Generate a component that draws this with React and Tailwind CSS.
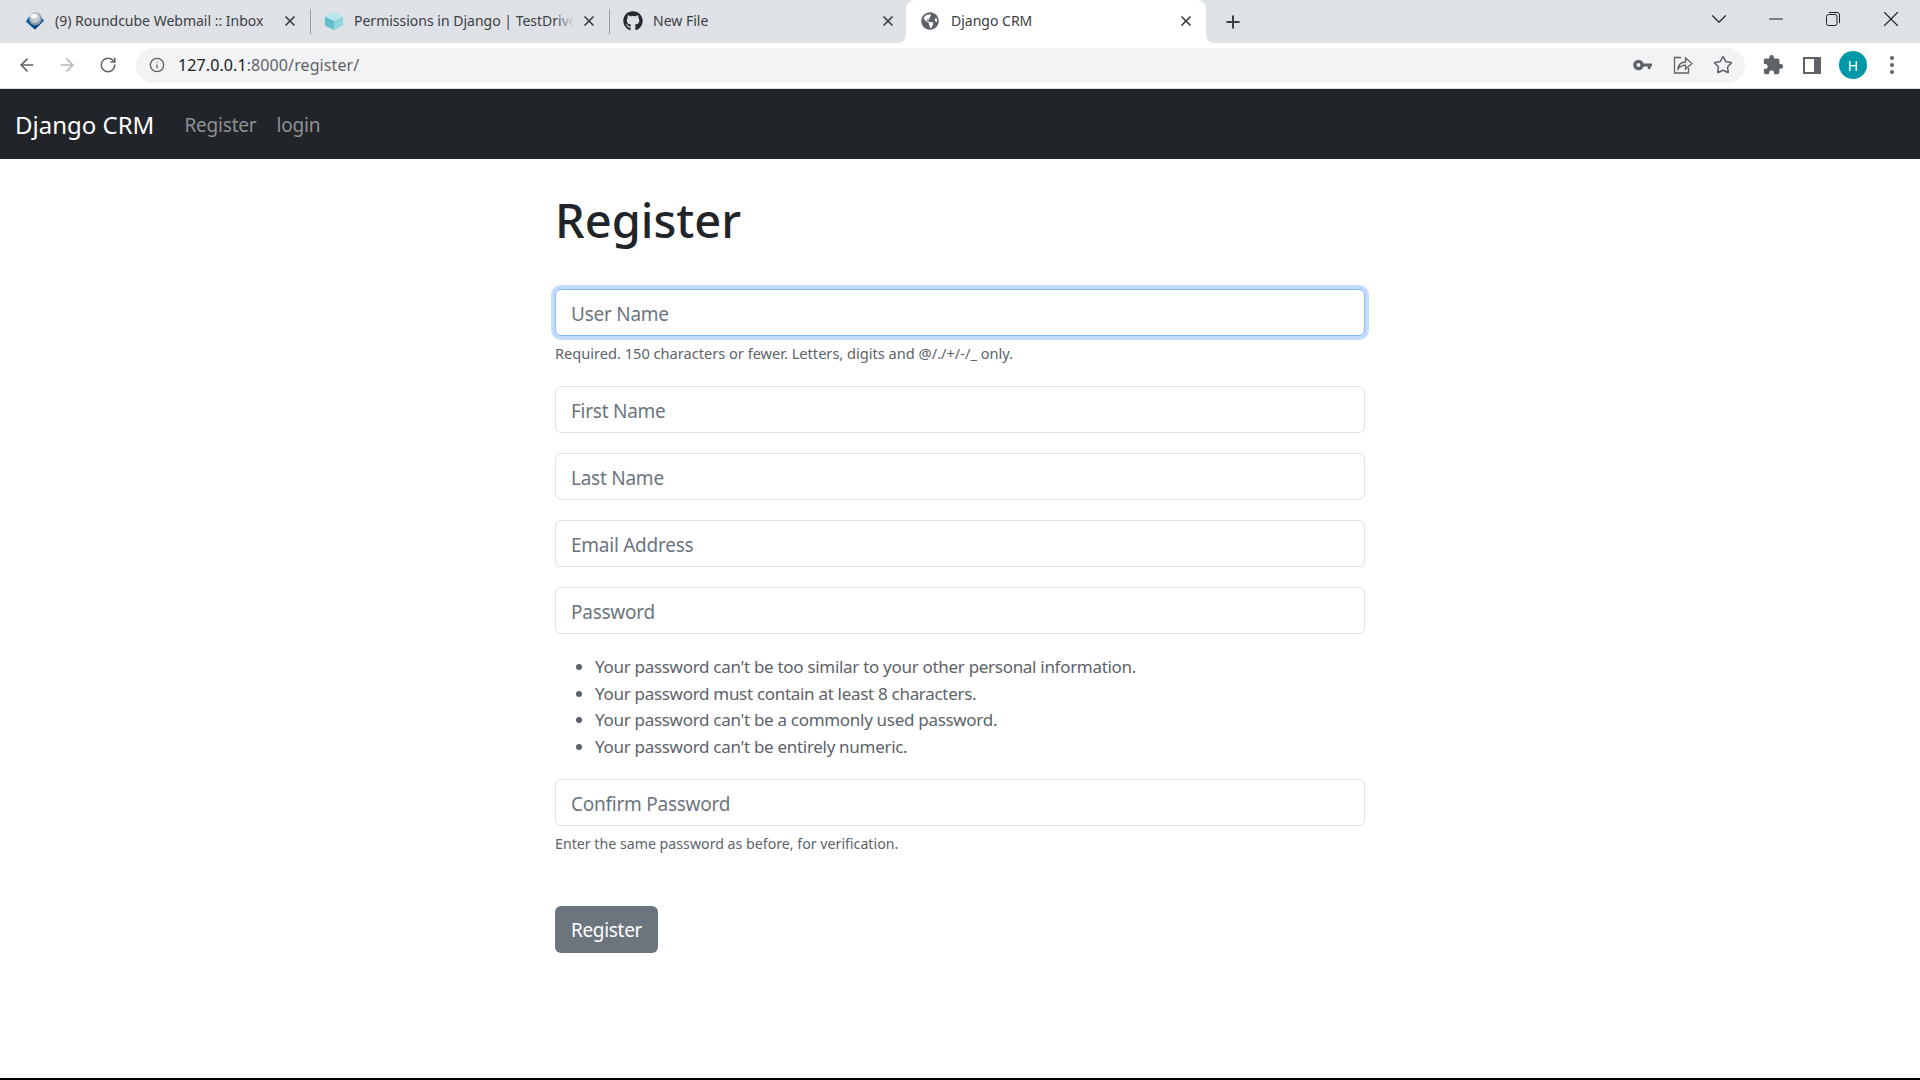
import { X, Plus, ArrowLeft, ArrowRight, RotateCw, Info, Star, ChevronDown, Minus } from "lucide-react";
import { FaGithub, FaGlobeAmericas } from "react-icons/fa";
import { MdExtension } from "react-icons/md";

const uiFont = "font-['Noto_Sans',sans-serif]";

const RoundcubeIcon = () => (
  <svg width="22" height="20" viewBox="0 0 22 20">
    <path d="M1 10.5 L11 19.5 L21 9.5 L17.5 6 L4 6 Z" fill="#0f5fa8" />
    <path d="M3 12 L11 16.5 L19.5 10.5 L11 19 Z" fill="#0a3f78" />
    <circle cx="11.5" cy="7.5" r="7" fill="#8f9aa6" />
    <circle cx="11" cy="6.5" r="5.6" fill="#c3c9cf" />
    <ellipse cx="10" cy="4.6" rx="3.8" ry="2.6" fill="#f4f5f6" />
  </svg>
);

const CubeIcon = () => (
  <svg width="22" height="22" viewBox="0 0 22 22">
    <path d="M11 1 L21 6 L11 11 L1 6 Z" fill="#b5e6ec" />
    <path d="M1 6 L11 11 L11 21 L1 16 Z" fill="#62c0cc" />
    <path d="M21 6 L11 11 L11 21 L21 16 Z" fill="#8fd5de" />
  </svg>
);

const KeyIcon = () => (
  <svg width="20" height="12" viewBox="0 0 20 12">
    <circle cx="5.5" cy="6" r="3.6" fill="none" stroke="#5f6368" strokeWidth="3.4" />
    <path d="M9 4.5 H19 V7.5 H17.5 V10 H14.8 V7.5 H9 Z" fill="#5f6368" />
  </svg>
);

const ShareIcon = () => (
  <svg width="20" height="20" viewBox="0 0 20 20" fill="none" stroke="#5f6368" strokeWidth="1.3">
    <path d="M8 2.5 H1.5 V18 H15.5 V13" />
    <path d="M5 14 C5.5 9.5 8.5 7 12.5 7 V3 L19 8.5 L12.5 14 V10.2 C9.5 10.2 7 11.5 5 14 Z" />
  </svg>
);

const SidePanelIcon = () => (
  <div className="flex h-[17px] w-[18px] bg-[#5f6368] p-[2px]">
    <div className="h-full w-[9px] bg-white" />
  </div>
);

const RestoreIcon = () => (
  <svg width="14" height="14" viewBox="0 0 14 14" fill="none" stroke="#202124" strokeWidth="1">
    <rect x="0.5" y="2.5" width="10.5" height="11" rx="2" />
    <path d="M3 0.5 H11 Q13.5 0.5 13.5 3 V11" />
  </svg>
);

const Tab = ({ width, icon, title, textWidth, fade }) => (
  <div className={`flex h-full shrink-0 items-center pb-[1px] pl-[13px] ${width}`}>
    <div className="flex w-[20px] shrink-0 justify-center">{icon}</div>
    <span className={`-mt-[2px] ml-[10px] overflow-hidden whitespace-nowrap text-[14px] text-[#3c4043] ${textWidth}`}>
      {title}
    </span>
    {fade && <span className="-ml-[18px] h-[20px] w-[18px] shrink-0 bg-gradient-to-r from-transparent to-[#dee1e6]" />}
    <X size={16} strokeWidth={2.6} className="ml-auto shrink-0 text-[#3c4043]" />
    <span className="ml-[12px] h-[25px] w-px shrink-0 bg-[#9aa0a6]" />
  </div>
);

const TabStrip = () => (
  <div className="flex h-[43px] shrink-0 items-stretch bg-[#dee1e6] pl-[12px]">
    <Tab width="w-[299px]" textWidth="w-[212px]" icon={<RoundcubeIcon />} title="(9) Roundcube Webmail :: Inbox" />
    <Tab width="w-[299px]" textWidth="w-[220px]" icon={<CubeIcon />} title="Permissions in Django | TestDriven.io" fade />
    <div className="flex h-full w-[296px] shrink-0 items-center pb-[1px] pl-[13px] pr-[10px]">
      <FaGithub size={20} className="shrink-0 text-[#24292f]" />
      <span className="-mt-[2px] ml-[10px] text-[14px] text-[#3c4043]">New File</span>
      <X size={16} strokeWidth={2.6} className="ml-auto text-[#3c4043]" />
    </div>
    <div className="relative flex h-full w-[300px] shrink-0 items-center rounded-t-[9px] bg-white pb-[1px] pl-[15px] pr-[12px]">
      <div className="absolute -left-[8px] bottom-0 h-[8px] w-[8px] bg-white" />
      <div className="absolute -left-[8px] bottom-0 h-[8px] w-[8px] rounded-br-[8px] bg-[#dee1e6]" />
      <div className="absolute -right-[8px] bottom-0 h-[8px] w-[8px] bg-white" />
      <div className="absolute -right-[8px] bottom-0 h-[8px] w-[8px] rounded-bl-[8px] bg-[#dee1e6]" />
      <FaGlobeAmericas size={18} className="shrink-0 text-[#5f6368]" />
      <span className="-mt-[2px] ml-[12px] text-[14px] text-[#3c4043]">Django CRM</span>
      <X size={16} strokeWidth={2.6} className="ml-auto text-[#3c4043]" />
    </div>
    <div className="flex w-[54px] shrink-0 items-center justify-center">
      <Plus size={20} strokeWidth={2.4} className="text-[#3c4043]" />
    </div>
    <div className="ml-auto flex items-center pb-[6px] text-[#202124]">
      <ChevronDown size={26} strokeWidth={1} className="mr-[33px]" />
      <Minus size={22} strokeWidth={1.1} className="mr-[39px]" />
      <div className="mr-[38px]"><RestoreIcon /></div>
      <X size={26} strokeWidth={1} className="mr-[16px]" />
    </div>
  </div>
);

const Toolbar = () => (
  <div className="flex h-[46px] shrink-0 items-center border-b border-[#dadce0] bg-white pb-[1px]">
    <div className="flex w-[136px] shrink-0 items-center pl-[17px]">
      <ArrowLeft size={20} strokeWidth={2} className="text-[#5f6368]" />
      <ArrowRight size={20} strokeWidth={2} className="ml-[20px] text-[#b4b7bb]" />
      <RotateCw size={18} strokeWidth={2} className="ml-[22px] text-[#5f6368]" />
    </div>
    <div className="flex h-[35px] w-[1609px] shrink-0 items-center rounded-full bg-[#f1f3f4] pl-[13px] pr-[12px]">
      <Info size={16} strokeWidth={2} className="text-[#5f6368]" />
      <span className="ml-[13px] text-[16px] tracking-[0.1px] text-[#202124]">
        127.0.0.1<span className="text-[#5f6368]">:8000/register/</span>
      </span>
      <div className="ml-auto flex items-center gap-[20px]">
        <KeyIcon />
        <ShareIcon />
        <Star size={20} strokeWidth={1.8} className="text-[#5f6368]" />
      </div>
    </div>
    <div className="flex flex-1 items-center pl-[17px]">
      <MdExtension size={22} className="text-[#5f6368]" />
      <div className="ml-[19px]"><SidePanelIcon /></div>
      <div className="ml-[18px] flex h-[28px] w-[28px] items-center justify-center rounded-full bg-[#0097a7] text-[14px] text-white">H</div>
      <div className="ml-[23px] flex flex-col gap-[3px]">
        <span className="h-[4px] w-[4px] rounded-full bg-[#5f6368]" />
        <span className="h-[4px] w-[4px] rounded-full bg-[#5f6368]" />
        <span className="h-[4px] w-[4px] rounded-full bg-[#5f6368]" />
      </div>
    </div>
  </div>
);

const Field = ({ placeholder, type = "text", focused }) => (
  <input
    type={type}
    placeholder={placeholder}
    className={`block h-[47px] w-full rounded-[6px] border bg-white px-[15px] pt-[2px] text-[19px] tracking-[-0.25px] outline-none placeholder:text-[#6c757d] ${focused ? "border-[#86b7fe] shadow-[0_0_0_4px_#c2dbfe]" : "border-[#dee2e6]"}`}
  />
);

const passwordRules = [
  "Your password can't be too similar to your other personal information.",
  "Your password must contain at least 8 characters.",
  "Your password can't be a commonly used password.",
  "Your password can't be entirely numeric.",
];

export default function App() {
  return (
    <div className={`flex h-screen flex-col border-b-2 border-black bg-white ${uiFont}`}>
      <TabStrip />
      <Toolbar />
      <nav className="flex h-[70px] shrink-0 items-center bg-[#212529] pl-[15px] pt-[2px]">
        <span className="text-[24px] text-white">Django CRM</span>
        <span className="ml-[30px] text-[19px] tracking-[-0.2px] text-[#8f9193]">Register</span>
        <span className="ml-[20px] text-[19px] tracking-[-0.2px] text-[#8f9193]">login</span>
      </nav>
      <main className="mx-auto w-[810px] pt-[31px] text-[#212529]">
        <h1 className="h-[99px] text-[47px] leading-[60px] font-medium">Register</h1>
        <Field placeholder="User Name" focused />
        <p className="mb-[22px] mt-[6px] text-[14.6px] leading-[22px] text-[#5c636a]">
          Required. 150 characters or fewer. Letters, digits and @/./+/-/_ only.
        </p>
        <div className="flex flex-col gap-[20px]">
          <Field placeholder="First Name" />
          <Field placeholder="Last Name" />
          <Field placeholder="Email Address" />
          <Field type="password" placeholder="Password" />
        </div>
        <ul className="mb-[19px] mt-[20px] list-disc pl-[40px] text-[17px] leading-[26.5px] tracking-[-0.3px] text-[#5c636a]">
          {passwordRules.map((rule) => (
            <li key={rule}>{rule}</li>
          ))}
        </ul>
        <Field type="password" placeholder="Confirm Password" />
        <p className="mt-[7px] text-[14.2px] leading-[22px] text-[#5c636a]">
          Enter the same password as before, for verification.
        </p>
        <button className="mt-[51px] block h-[47px] w-[103px] rounded-[6px] bg-[#6c757d] pt-[2px] text-[19px] tracking-[-0.3px] text-white">
          Register
        </button>
      </main>
    </div>
  );
}
